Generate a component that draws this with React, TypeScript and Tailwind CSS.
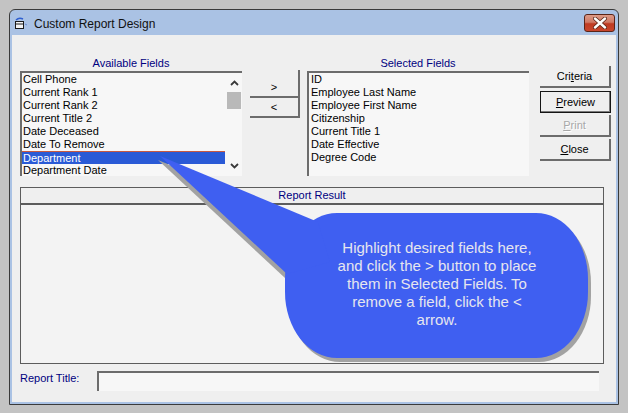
import React from "react";

const avail = [
  "Cell Phone",
  "Current Rank 1",
  "Current Rank 2",
  "Current Title 2",
  "Date Deceased",
  "Date To Remove",
  "Department",
  "Department Date",
];
const sel = [
  "ID",
  "Employee Last Name",
  "Employee First Name",
  "Citizenship",
  "Current Title 1",
  "Date Effective",
  "Degree Code",
];

function Chevron({ up }: { up?: boolean }) {
  return (
    <svg width="9" height="6" viewBox="0 0 9 6">
      <path
        d={up ? "M1 5 L4.5 1.5 L8 5" : "M1 1 L4.5 4.5 L8 1"}
        fill="none"
        stroke="#3a3a3a"
        strokeWidth="1.8"
      />
    </svg>
  );
}

export default function App() {
  return (
    <div className="relative w-[628px] h-[413px] overflow-hidden bg-[#c3c3c3] pt-[9px] pl-[9px] font-['Liberation_Sans',Arial,sans-serif] text-[11px] text-black">
      {/* window */}
      <div className="w-[610px] h-[396px] flex flex-col border border-[#3a3a3a] rounded-t-[6px] bg-[#aac2e4]">
        {/* title bar */}
        <div className="h-[25px] flex items-center pl-[4px] pr-[3px]">
          <svg width="14" height="13" viewBox="0 0 14 13" className="mt-[2px]">
            <path d="M2 3 Q5 0 9 2" fill="none" stroke="#2f5fd0" strokeWidth="1.5" />
            <rect x="1.5" y="4.5" width="8" height="7" fill="#f4f4f4" stroke="#1a1a1a" />
            <line x1="1.5" y1="7" x2="9.5" y2="7" stroke="#1a1a1a" />
            <path d="M11 7 L13 8" stroke="#6a8ad0" strokeWidth="1" />
          </svg>
          <span className="ml-[6px] mt-[2px] text-[12px] text-[#111]">Custom Report Design</span>
          <div className="ml-auto w-[31px] h-[18px] mt-[1px] rounded-[3px] border border-[#5a2418] bg-[linear-gradient(#dc9a88_0%,#d07a66_45%,#bf3a22_55%,#c8462c_100%)] flex items-center justify-center">
            <svg width="14" height="12" viewBox="0 0 14 12">
              <path d="M2 1.5 L12 10.5 M12 1.5 L2 10.5" stroke="#5a2418" strokeWidth="4" strokeLinecap="round" />
              <path d="M2 1.5 L12 10.5 M12 1.5 L2 10.5" stroke="#ffffff" strokeWidth="2.4" strokeLinecap="round" />
            </svg>
          </div>
        </div>

        {/* client */}
        <div className="flex-1 mx-[2px] mb-[2px] bg-[#efefef] pl-[8px] pt-[21px] flex flex-col">
          <div className="flex items-start h-[120px]">
            {/* available */}
            <div className="w-[222px] flex flex-col">
              <div className="h-[15px] leading-[15px] text-center text-[#000080]">Available Fields</div>
              <div className="h-[105px] border-t-2 border-l-2 border-[#6c6c6c] bg-[#f7f7f7] flex">
                <div className="flex-1 flex flex-col">
                  {avail.map((a) => (
                    <div
                      key={a}
                      className={
                        a === "Department"
                          ? "h-[13px] leading-[12px] pl-[1px] mr-[1px] bg-[#2a5ad6] text-white border-t border-[#c85a40]"
                          : "h-[13px] leading-[13px] pl-[1px]"
                      }
                    >
                      {a}
                    </div>
                  ))}
                </div>
                <div className="w-[16px] flex flex-col items-center">
                  <div className="h-[19px] flex items-center justify-center pt-[1px]">
                    <Chevron up />
                  </div>
                  <div className="w-[14px] h-[17px] bg-[#b9b9b9]" />
                  <div className="flex-1" />
                  <div className="h-[17px] flex items-center justify-center pb-[3px]">
                    <Chevron />
                  </div>
                </div>
              </div>
            </div>

            {/* move buttons */}
            <div className="ml-[8px] mt-[14px] w-[50px] flex flex-col">
              <div className="h-[28px] border-r-2 border-b-2 border-[#6c6c6c] text-center leading-[13px] pt-[11px]">&gt;</div>
              <div className="h-[20px] border-r-2 border-b-2 border-[#6c6c6c] text-center leading-[13px] pt-[3px]">&lt;</div>
            </div>

            {/* selected */}
            <div className="ml-[7px] w-[222px] flex flex-col">
              <div className="h-[15px] leading-[15px] text-center text-[#000080]">Selected Fields</div>
              <div className="h-[105px] border-t-2 border-l-2 border-[#6c6c6c] bg-[#f7f7f7] flex flex-col">
                {sel.map((s) => (
                  <div key={s} className="h-[13px] leading-[13px] pl-[2px]">
                    {s}
                  </div>
                ))}
              </div>
            </div>

            {/* action buttons */}
            <div className="ml-[11px] mt-[10px] w-[71px] flex flex-col">
              <div className="h-[22px] border-r-2 border-b-2 border-[#6c6c6c] flex items-center justify-center">
                <span>
                  Cri<u>t</u>eria
                </span>
              </div>
              <div className="mt-[3px] h-[22px] border border-[#151515] shadow-[inset_-1px_-1px_0_#7a7a7a] flex items-center justify-center">
                <span>
                  <u>P</u>review
                </span>
              </div>
              <div className="mt-[2px] h-[22px] border-r-2 border-b-2 border-[#6c6c6c] flex items-center justify-center">
                <span className="text-[#a8a8a8] [text-shadow:1px_1px_0_#ffffff]">
                  <u>P</u>rint
                </span>
              </div>
              <div className="mt-[2px] h-[22px] border-r-2 border-b-2 border-[#6c6c6c] flex items-center justify-center">
                <span>
                  <u>C</u>lose
                </span>
              </div>
            </div>
          </div>

          {/* report result */}
          <div className="mt-[11px] w-[584px] h-[177px] border border-[#5c5c5c] flex flex-col bg-[#f3f3f3]">
            <div className="h-[17px] leading-[15px] text-center text-[#000080] border-b-2 border-[#5c5c5c] bg-[#efefef]">
              Report Result
            </div>
            <div className="flex-1" />
          </div>

          {/* report title */}
          <div className="mt-[7px] flex items-start h-[20px]">
            <div className="w-[77px] mt-[1px] leading-[13px] text-[#000080]">Report Title:</div>
            <div className="w-[502px] h-[20px] border-t-2 border-l-2 border-[#6c6c6c] bg-[#f7f7f7]" />
          </div>
        </div>
      </div>

      {/* callout bubble */}
      <svg className="absolute left-0 top-0 pointer-events-none" width="628" height="413" viewBox="0 0 628 413">
        <g fill="#a2a2a2">
          <g transform="translate(3,4)">
            <rect x="285" y="213" width="303" height="145" rx="52" ry="66" />
          </g>
          <g transform="translate(-2,4)">
            <polygon points="160,156 318,222 330,262 287,274" />
          </g>
        </g>
        <g fill="#3f5ff1">
          <rect x="285" y="213" width="303" height="145" rx="52" ry="66" />
          <polygon points="160,156 318,222 330,262 287,274" />
        </g>
      </svg>
      <div className="absolute left-[287px] top-[239px] w-[300px] text-center text-[15px] leading-[18px] text-[#e6e6ee]">
        Highlight desired fields here,
        <br />
        and click the &gt; button to place
        <br />
        them in Selected Fields. To
        <br />
        remove a field, click the &lt;
        <br />
        arrow.
      </div>
    </div>
  );
}
